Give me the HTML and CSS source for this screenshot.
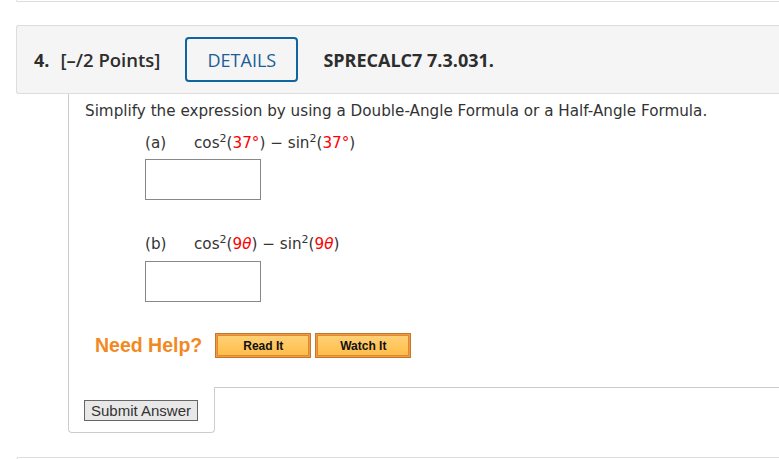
FILE: index.html
```html
<!DOCTYPE html>
<html>
<head>
<meta charset="utf-8">
<link rel="stylesheet" href="styles.css">
</head>
<body>
<div class="prev-q"></div>
<div class="q-header">
  <span class="q-num">4.</span>
  <span class="q-points">[–/2 Points]</span>
  <span class="details-btn">DETAILS</span>
  <span class="q-code">SPRECALC7 7.3.031.</span>
</div>
<div class="q-body">
  <p class="prompt">Simplify the expression by using a Double-Angle Formula or a Half-Angle Formula.</p>
  <div class="part">
    <div class="part-row"><span class="part-label">(a)</span><span class="expr">cos<sup>2</sup>(<span class="red">37°</span>) − sin<sup>2</sup>(<span class="red">37°</span>)</span></div>
    <div class="answer-box"></div>
  </div>
  <div class="part part-b">
    <div class="part-row"><span class="part-label">(b)</span><span class="expr">cos<sup>2</sup>(<span class="red">9<i>θ</i></span>) − sin<sup>2</sup>(<span class="red">9<i>θ</i></span>)</span></div>
    <div class="answer-box"></div>
  </div>
  <div class="help-row">
    <span class="need-help">Need Help?</span>
    <span class="help-btn">Read It</span>
    <span class="help-btn">Watch It</span>
  </div>
</div>
<div class="submit-row">
  <div class="submit-tab"><span class="submit-btn">Submit Answer</span></div>
  <div class="submit-fill"></div>
</div>
<div class="next-q"></div>
</body>
</html>
```
FILE: styles.css
```css
html, body {
  margin: 0;
  padding: 0;
  background: #fff;
  overflow: hidden;
}
body {
  width: 779px;
  height: 459px;
  font-family: "DejaVu Sans", Verdana, sans-serif;
  color: #333;
}
.prev-q {
  margin-left: 16px;
  height: 1px;
  border-left: 1px solid #ddd;
  border-bottom: 1px solid #ddd;
  border-bottom-left-radius: 3px;
}
.q-header {
  margin-top: 23px;
  margin-left: 16px;
  height: 67px;
  background: #f5f5f5;
  border: 1px solid #ddd;
  border-right: none;
  border-radius: 3px 0 0 3px;
  display: flex;
  align-items: center;
  padding-left: 17px;
  font-family: "Open Sans", sans-serif;
  font-size: 18px;
  color: #2d2d2d;
}
.q-num {
  font-weight: 700;
  margin-right: 11px;
}
.q-points {
  font-weight: 600;
  font-size: 18.5px;
  margin-right: 25px;
}
.details-btn {
  box-sizing: border-box;
  width: 113px;
  height: 45px;
  border: 2px solid #1065a0;
  border-radius: 4px;
  display: flex;
  align-items: center;
  justify-content: center;
  color: #1a5e96;
  font-size: 18px;
  font-weight: 400;
  margin-right: 25px;
}
.q-code {
  font-weight: 700;
}
.q-body {
  margin-left: 68px;
  border-left: 1px solid #ccc;
  padding: 8px 0 0 16px;
  height: 285px;
  font-size: 15.2px;
}
.prompt {
  margin: 0;
  line-height: 18px;
}
.part {
  margin-left: 60px;
  margin-top: 14px;
}
.part-b {
  margin-top: 35px;
}
.part-row {
  line-height: 18px;
  height: 18px;
  display: flex;
}
.part-label {
  width: 49px;
}
sup {
  font-size: 11px;
  line-height: 0;
  vertical-align: 6px;
}
.red {
  color: #ff0000;
}
.red i {
  font-style: italic;
}
.answer-box {
  margin-top: 7px;
  box-sizing: border-box;
  width: 116px;
  height: 41px;
  border: 1px solid #888;
  background: #fff;
}
.part-b .answer-box {
  margin-top: 8px;
}
.help-row {
  margin-top: 31px;
  margin-left: 10px;
  display: flex;
  align-items: center;
  gap: 4px;
}
.need-help {
  font-family: "Liberation Sans", Arial, sans-serif;
  font-weight: 700;
  font-size: 19.5px;
  color: #f2891e;
  margin-right: 9px;
}
.help-btn {
  box-sizing: border-box;
  width: 96px;
  height: 25px;
  border: 1px solid #c0782e;
  padding: 2px;
  display: flex;
  font-family: "Liberation Sans", Arial, sans-serif;
  font-weight: 700;
  font-size: 12px;
  color: #111;
  align-items: center;
  justify-content: center;
  background: linear-gradient(#ffd27a, #ffbb45);
  box-shadow: inset 0 0 0 1px #f59a35, inset 0 0 0 2px #d98a3a;
}
.submit-row {
  display: flex;
  height: 46px;
}
.submit-tab {
  margin-left: 68px;
  width: 130px;
  border-left: 1px solid #ccc;
  border-right: 1px solid #ccc;
  border-bottom: 1px solid #ccc;
  border-radius: 0 0 4px 4px;
  padding: 13px 0 0 15px;
}
.submit-btn {
  box-sizing: border-box;
  display: flex;
  align-items: center;
  justify-content: center;
  width: 114px;
  height: 21px;
  border: 1px solid #666;
  background: #e8e8e8;
  font-family: "Liberation Sans", Arial, sans-serif;
  font-size: 15px;
  color: #333;
}
.submit-fill {
  flex: 1;
  border-top: 1px solid #ccc;
}
.next-q {
  margin-top: 24px;
  margin-left: 16px;
  height: 10px;
  border-top: 1px solid #ddd;
  border-left: 1px solid #ddd;
  border-top-left-radius: 3px;
}
```
